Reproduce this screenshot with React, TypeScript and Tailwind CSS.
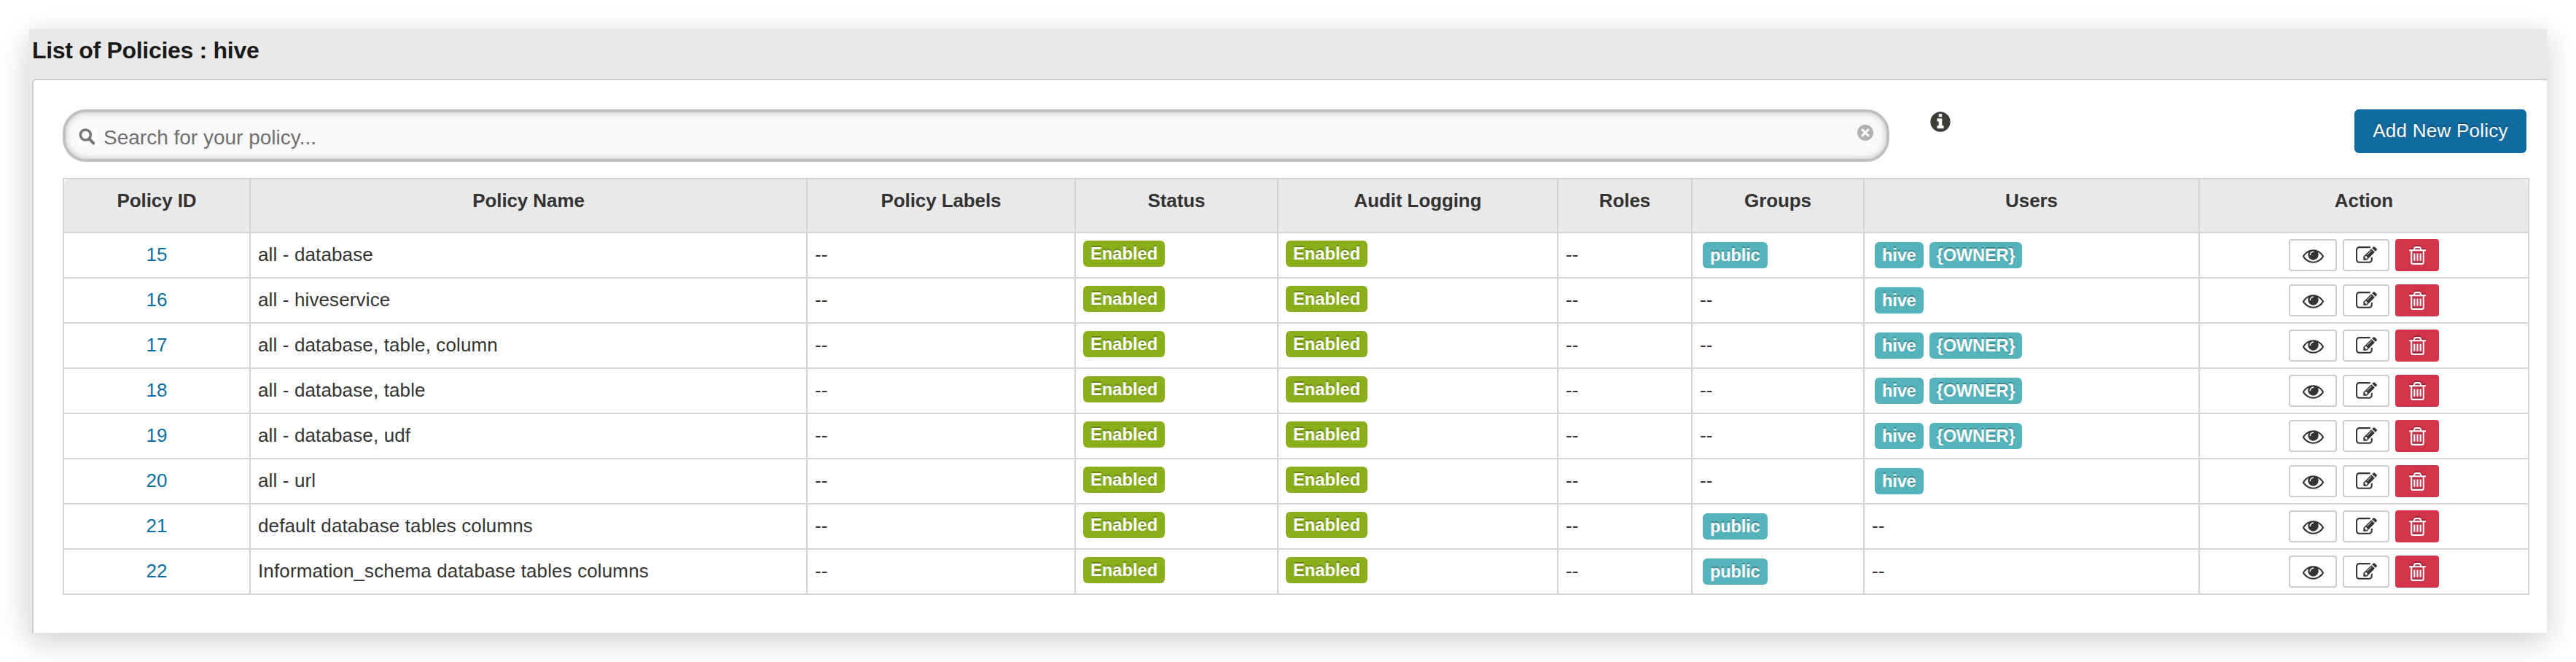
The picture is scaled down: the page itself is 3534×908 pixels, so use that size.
import type { ReactNode } from 'react';
import clsx from 'clsx';

type Policy = {
  id: number;
  name: string;
  groups: string[];
  users: string[];
};

const policies: Policy[] = [
  { id: 15, name: 'all - database', groups: ['public'], users: ['hive', '{OWNER}'] },
  { id: 16, name: 'all - hiveservice', groups: [], users: ['hive'] },
  { id: 17, name: 'all - database, table, column', groups: [], users: ['hive', '{OWNER}'] },
  { id: 18, name: 'all - database, table', groups: [], users: ['hive', '{OWNER}'] },
  { id: 19, name: 'all - database, udf', groups: [], users: ['hive', '{OWNER}'] },
  { id: 20, name: 'all - url', groups: [], users: ['hive'] },
  { id: 21, name: 'default database tables columns', groups: ['public'], users: [] },
  { id: 22, name: 'Information_schema database tables columns', groups: ['public'], users: [] },
];

const columns = [
  { label: 'Policy ID', width: 'w-[256px]' },
  { label: 'Policy Name', width: 'w-[764px]' },
  { label: 'Policy Labels', width: 'w-[368px]' },
  { label: 'Status', width: 'w-[278px]' },
  { label: 'Audit Logging', width: 'w-[384px]' },
  { label: 'Roles', width: 'w-[184px]' },
  { label: 'Groups', width: 'w-[236px]' },
  { label: 'Users', width: 'w-[460px]' },
  { label: 'Action', width: 'w-[452px]' },
];

const icons = {
  eye: 'M1664 960q-152-236-381-353 61 104 61 225 0 185-131.500 316.500t-316.500 131.500-316.500-131.500-131.500-316.500q0-121 61-225-229 117-381 353 133 205 333.500 326.500t434.500 121.500 434.500-121.500 333.500-326.500zm-720-384q0-20-14-34t-34-14q-125 0-214.500 89.500t-89.500 214.500q0 20 14 34t34 14 34-14 14-34q0-86 61-147t147-61q20 0 34-14t14-34zm848 384q0 34-20 69-140 230-376.500 368.500t-499.500 138.500-499.500-139-376.500-368q-20-35-20-69t20-69q140-229 376.500-368t499.500-139 499.500 139 376.500 368q20 35 20 69z',
  edit: 'M888 1184l116-116-152-152-116 116v56h96v96h56zm440-720q-16-16-33 1l-350 350q-17 17-1 33t33-1l350-350q17-17 1-33zm80 594v190q0 119-84.500 203.500t-203.500 84.500h-832q-119 0-203.500-84.500t-84.500-203.500v-832q0-119 84.500-203.500t203.500-84.500h832q63 0 117 25 15 7 18 23 3 17-9 29l-49 49q-14 14-32 8-23-6-45-6h-832q-66 0-113 47t-47 113v832q0 66 47 113t113 47h832q66 0 113-47t47-113v-126q0-13 9-22l64-64q15-15 35-7t20 29zm-96-738l288 288-672 672h-288v-288zm444 132l-92 92-288-288 92-92q28-28 68-28t68 28l152 152q28 28 28 68t-28 68z',
  trash: 'M704 736v576q0 14-9 23t-23 9h-64q-14 0-23-9t-9-23v-576q0-14 9-23t23-9h64q14 0 23 9t9 23zm256 0v576q0 14-9 23t-23 9h-64q-14 0-23-9t-9-23v-576q0-14 9-23t23-9h64q14 0 23 9t9 23zm256 0v576q0 14-9 23t-23 9h-64q-14 0-23-9t-9-23v-576q0-14 9-23t23-9h64q14 0 23 9t9 23zm128 724v-948h-896v948q0 22 7 40.500t14.500 27 10.500 8.500h832q3 0 10.500-8.500t14.500-27 7-40.500zm-672-1076h448l-48-117q-7-9-17-11h-317q-10 2-17 11zm928 32v64q0 14-9 23t-23 9h-96v948q0 83-47 143.500t-113 60.500h-832q-66 0-113-58.500t-47-141.500v-952h-96q-14 0-23-9t-9-23v-64q0-14 9-23t23-9h309l70-167q15-37 54-63t79-26h320q40 0 79 26t54 63l70 167h309q14 0 23 9t9 23z',
  info: 'M1152 1376v-160q0-14-9-23t-23-9h-96v-512q0-14-9-23t-23-9h-320q-14 0-23 9t-9 23v160q0 14 9 23t23 9h96v320h-96q-14 0-23 9t-9 23v160q0 14 9 23t23 9h448q14 0 23-9t9-23zm-128-896v-160q0-14-9-23t-23-9h-192q-14 0-23 9t-9 23v160q0 14 9 23t23 9h192q14 0 23-9t9-23zm640 416q0 209-103 385.500t-279.500 279.500-385.500 103-385.500-103-279.500-279.500-103-385.500 103-385.500 279.500-279.500 385.500-103 385.500 103 279.500 279.500 103 385.500z',
};

function Icon({ name, className }: { name: keyof typeof icons; className?: string }) {
  return (
    <svg viewBox="0 0 1792 1792" fill="currentColor" className={className} aria-hidden="true">
      <path d={icons[name]} />
    </svg>
  );
}

function Badge({ color, children }: { color: 'green' | 'teal'; children: ReactNode }) {
  return (
    <span
      className={clsx(
        'block h-9 rounded-md px-2.5 text-[23.7px] leading-9 font-bold text-white [text-shadow:0_-2px_0_rgba(0,0,0,0.25)]',
        color === 'green' ? 'bg-[#8aaf1b] tracking-normal' : 'bg-[#54b3bb] tracking-[-0.2px]'
      )}
    >
      {children}
    </span>
  );
}

function BadgeList({ items }: { items: string[] }) {
  if (items.length === 0) {
    return <div className="px-2.5 pt-[9px]">--</div>;
  }
  return (
    <div className="flex gap-2 px-3.5 pt-3">
      {items.map(item => (
        <Badge key={item} color="teal">{item}</Badge>
      ))}
    </div>
  );
}

function StatusCell() {
  return (
    <td className="border-2 border-[#d5d5d5] p-0 align-top">
      <div className="flex px-2.5 pt-2.5">
        <Badge color="green">Enabled</Badge>
      </div>
    </td>
  );
}

function TextCell({ className, children }: { className?: string; children: ReactNode }) {
  return (
    <td className={clsx('border-2 border-[#d5d5d5] px-2.5 pt-[9px] pb-0 align-top', className)}>{children}</td>
  );
}

export default function App() {
  return (
    <div className="h-[908px] w-[3534px] overflow-hidden bg-white p-10 font-['Liberation_Sans',Arial,sans-serif] text-[#333]">
      <div className="flex h-[828px] flex-col bg-[#e9e9e9] shadow-[0_10px_40px_rgba(0,0,0,0.2)]">
        <h3 className="h-[68px] pt-2 pl-1 text-[32px] leading-[42px] font-bold tracking-[-0.3px] text-[#1a1a1a]">
          List of Policies : hive
        </h3>

        <div className="ml-1 flex-1 rounded-tl-md border-t-2 border-l-2 border-[#ccc] bg-white pt-10 pl-10">
          {/* Search and toolbar */}
          <div className="flex h-[94px] items-start">
            <div className="flex h-[72px] w-[2506px] items-center rounded-[32px] border-4 border-[#c0c0c0] bg-[#f9f9f9] pr-[18px] pl-[18px] shadow-[inset_0_0_10px_rgba(0,0,0,0.22)]">
              <svg viewBox="0 0 24 24" className="mt-1 h-6 w-6 bg-white" fill="none" stroke="#777" aria-hidden="true">
                <circle cx="9.3" cy="9" r="7" strokeWidth="3.600" />
                <path d="M14.6 14.6l5.600 5.800" strokeWidth="4.200" strokeLinecap="round" />
              </svg>
              <span className="ml-2.5 flex-1 pt-1.5 text-[28px] leading-10 text-[#707070]">Search for your policy...</span>
              <svg viewBox="0 0 22 22" className="mb-[9px] h-[22px] w-[22px]" aria-hidden="true">
                <circle cx="11" cy="11" r="11" fill="#b2b2b2" />
                <path d="M7 7l8 8M15 7l-8 8" stroke="#fff" strokeWidth="3" strokeLinecap="round" />
              </svg>
            </div>
            <Icon name="info" className="mt-px ml-[54px] h-8 w-8 text-[#3b3d38]" />
            <button className="mr-7 ml-auto h-[60px] w-[236px] rounded-md bg-[#116b9e] pb-0.5 text-[26px] leading-[58px] tracking-[0.25px] text-white [text-shadow:0_-2px_0_rgba(0,0,0,0.25)]">
              Add New Policy
            </button>
          </div>

          <table className="w-[3384px] table-fixed border-collapse text-[26px] leading-10 tracking-[0.13px]">
            <thead>
              <tr className="h-[74px]">
                {columns.map((column, i) => (
                  <th key={column.label} className={clsx('border-2 border-[#d5d5d5] p-0 tracking-[-0.1px]', column.width)}>
                    <div
                      className={clsx(
                        'h-[72px] bg-[#e9e9e9] pt-[9px]',
                        i === 0 && 'rounded-tl-md',
                        i === columns.length - 1 && 'rounded-tr-md'
                      )}
                    >
                      {column.label}
                    </div>
                  </th>
                ))}
              </tr>
            </thead>
            <tbody>
              {policies.map(policy => (
                <tr key={policy.id} className="h-[62px]">
                  <TextCell className="text-center text-[#0b6fa4]">{policy.id}</TextCell>
                  <TextCell>{policy.name}</TextCell>
                  <TextCell>--</TextCell>
                  <StatusCell />
                  <StatusCell />
                  <TextCell>--</TextCell>
                  <td className="border-2 border-[#d5d5d5] p-0 align-top">
                    <BadgeList items={policy.groups} />
                  </td>
                  <td className="border-2 border-[#d5d5d5] p-0 align-top">
                    <BadgeList items={policy.users} />
                  </td>
                  <td className="border-2 border-[#d5d5d5] p-0 align-top">
                    <div className="flex justify-center gap-2 pt-2">
                      <button className="flex h-11 w-[66px] items-center justify-center rounded border-2 border-[#ccc] bg-white">
                        <Icon name="eye" className="h-[29px] w-[29px]" />
                      </button>
                      <button className="flex h-11 w-16 items-center justify-center rounded border-2 border-[#ccc] bg-white">
                        <Icon name="edit" className="h-[29px] w-[29px]" />
                      </button>
                      <button className="flex h-11 w-[60px] items-center justify-center rounded bg-[#d1344b] text-white">
                        <Icon name="trash" className="h-[29px] w-[29px] drop-shadow-[0_-2px_0_rgba(0,0,0,0.25)]" />
                      </button>
                    </div>
                  </td>
                </tr>
              ))}
            </tbody>
          </table>
        </div>
      </div>
    </div>
  );
}
